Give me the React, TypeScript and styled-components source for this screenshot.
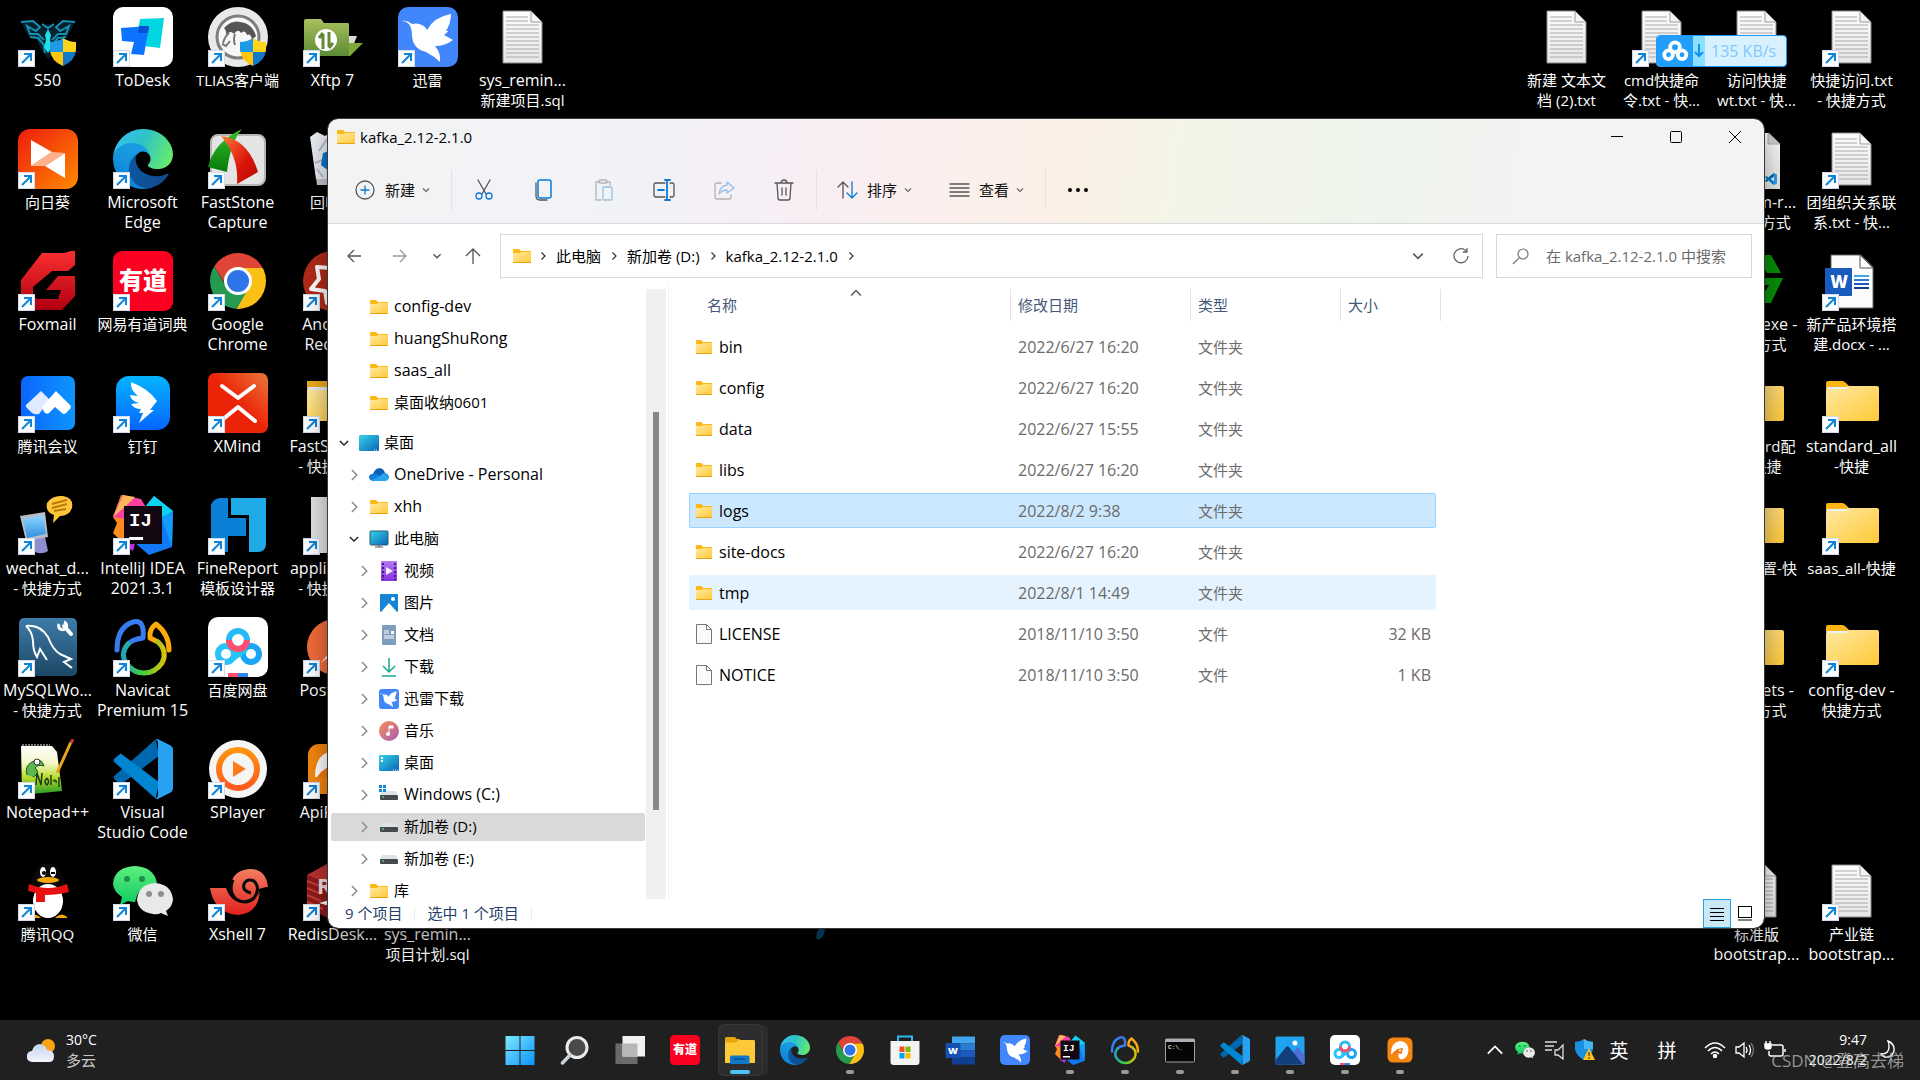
import React from 'react';
import styled, { createGlobalStyle, css } from 'styled-components';

const CJK = /[\u3000-\u9fff]/;
const FONT = '"Open Sans", "Noto Sans CJK SC", "Noto Sans", sans-serif';

const GlobalStyle = createGlobalStyle`
  *, *::before, *::after { box-sizing: border-box; }
  body { margin: 0; background: #000; font-family: ${FONT}; overflow: hidden; }
  button, input { font: inherit; color: inherit; border: 0; padding: 0; margin: 0; background: none; }
  button { cursor: default; }
  svg { display: block; flex: none; }
`;

/* ---------- artwork ---------- */

const DefsSvg = styled.svg`
  position: absolute;
`;

const Defs = () => (
  <DefsSvg width="0" height="0" aria-hidden="true">
    <defs>
      <linearGradient id="folder" x1="0" y1="0" x2="1" y2="1"><stop offset="0" stopColor="#ffe9a2" /><stop offset="1" stopColor="#ffc937" /></linearGradient>
      <linearGradient id="page" x1="0" y1="0" x2="0" y2="1"><stop offset="0" stopColor="#fdfdfd" /><stop offset="1" stopColor="#e6e6e6" /></linearGradient>
      <linearGradient id="edgeA" x1="0" y1=".3" x2="1" y2=".5"><stop offset="0" stopColor="#0c59a4" /><stop offset="1" stopColor="#114a8b" /></linearGradient>
      <linearGradient id="edgeB" x1=".8" y1=".1" x2=".3" y2="1"><stop offset="0" stopColor="#1b9de2" /><stop offset=".5" stopColor="#1595df" /><stop offset="1" stopColor="#0680d7" /></linearGradient>
      <linearGradient id="edgeC" x1="0" y1=".3" x2="1" y2=".6"><stop offset="0" stopColor="#35c1f1" /><stop offset=".45" stopColor="#2cc3c9" /><stop offset="1" stopColor="#66eb6e" /></linearGradient>
      <linearGradient id="sun" x1="0" y1="0" x2="1" y2="1"><stop offset="0" stopColor="#ee1c0c" /><stop offset="1" stopColor="#ff8a00" /></linearGradient>
      <linearGradient id="red" x1="0" y1="0" x2="0" y2="1"><stop offset="0" stopColor="#fb2f30" /><stop offset="1" stopColor="#b00010" /></linearGradient>
      <linearGradient id="meet" x1="0" y1="0" x2="1" y2="0"><stop offset="0" stopColor="#0a66ff" /><stop offset="1" stopColor="#0d95ff" /></linearGradient>
      <linearGradient id="ding" x1="0" y1="0" x2="0" y2="1"><stop offset="0" stopColor="#05b4ff" /><stop offset="1" stopColor="#0664ff" /></linearGradient>
      <linearGradient id="xmind" x1="0" y1="1" x2="1" y2="0"><stop offset=".5" stopColor="#ec2407" /><stop offset="1" stopColor="#e9783a" /></linearGradient>
      <linearGradient id="mysql" x1="0" y1="0" x2="0" y2="1"><stop offset="0" stopColor="#3d7ba8" /><stop offset="1" stopColor="#1c4866" /></linearGradient>
      <linearGradient id="navi" x1="0" y1="0" x2="1" y2="0"><stop offset="0" stopColor="#1fa6b8" /><stop offset=".45" stopColor="#3fcf3f" /><stop offset="1" stopColor="#d8c20a" /></linearGradient>
      <linearGradient id="wx" x1="0" y1="0" x2="0" y2="1"><stop offset="0" stopColor="#5cf07c" /><stop offset="1" stopColor="#10c964" /></linearGradient>
      <linearGradient id="shell" x1="0" y1="0" x2="0" y2="1"><stop offset="0" stopColor="#f37e62" /><stop offset="1" stopColor="#e21f1c" /></linearGradient>
      <linearGradient id="orange" x1="0" y1="0" x2="0" y2="1"><stop offset="0" stopColor="#ff930f" /><stop offset="1" stopColor="#ff5a1c" /></linearGradient>
      <linearGradient id="npp" x1="0" y1="0" x2="0" y2="1"><stop offset="0" stopColor="#fff" /><stop offset=".35" stopColor="#f4f8c8" /><stop offset=".65" stopColor="#b6dc28" /><stop offset="1" stopColor="#1d962a" /></linearGradient>
      <linearGradient id="xftp" x1="0" y1="0" x2="0" y2="1"><stop offset="0" stopColor="#a8c05c" /><stop offset="1" stopColor="#5c8a36" /></linearGradient>
      <linearGradient id="green" x1="0" y1="0" x2="0" y2="1"><stop offset="0" stopColor="#33c02a" /><stop offset="1" stopColor="#067a08" /></linearGradient>
      <linearGradient id="redOrange" x1="0" y1="0" x2="1" y2="1"><stop offset="0" stopColor="#ff7a3c" /><stop offset=".6" stopColor="#d8140a" /><stop offset="1" stopColor="#b80a04" /></linearGradient>
      <linearGradient id="desk" x1="0" y1="0" x2="1" y2="1"><stop offset="0" stopColor="#35d5e6" /><stop offset="1" stopColor="#0a62b8" /></linearGradient>
      <linearGradient id="win" x1="0" y1="0" x2="1" y2="1"><stop offset="0" stopColor="#7ce9ff" /><stop offset="1" stopColor="#0c92fb" /></linearGradient>
      <linearGradient id="purple" x1="0" y1="0" x2="0" y2="1"><stop offset="0" stopColor="#b678f5" /><stop offset="1" stopColor="#8433dd" /></linearGradient>
      <linearGradient id="music" x1="0" y1="0" x2="1" y2="1"><stop offset="0" stopColor="#fb8f52" /><stop offset="1" stopColor="#a45cb8" /></linearGradient>
      <linearGradient id="cloud" x1="0" y1="0" x2="0" y2="1"><stop offset="0" stopColor="#c3d3ee" /><stop offset="1" stopColor="#f2f6fd" /></linearGradient>
      <linearGradient id="glass" x1="0" y1="0" x2="0" y2="1"><stop offset="0" stopColor="#8fd8ff" /><stop offset="1" stopColor="#2f8fe0" /></linearGradient>
      <clipPath id="disc"><circle cx="30" cy="30" r="28" /></clipPath>
      <clipPath id="shieldClip"><path d="M45 31 Q51 35 58 35 V43 Q57 54 45 59 Q33 54 32 43 V35 Q39 35 45 31Z" /></clipPath>
    </defs>
  </DefsSvg>
);

const Shield = () => (
  <g clipPath="url(#shieldClip)">
    <rect x="32" y="31" width="13" height="14" fill="#1e9be6" /><rect x="45" y="31" width="13" height="14" fill="#ffd21c" />
    <rect x="32" y="45" width="13" height="14" fill="#ffc60d" /><rect x="45" y="45" width="13" height="14" fill="#1379c9" />
  </g>
);

const Bird = () => (
  <path fill="#fff" d="M4 14 Q9 13 14 17 Q21 15 27 20 L29 23 Q36 10 53 7 Q53 16 48 24 Q53 23 46 28 L55 33 Q47 39 37 39 Q43 46 42 55 Q36 49 28 45 Q15 42 14 29 Q14 21 11 17 Q8 14 4 14Z" />
);

const Clover = ({ mono }: { mono?: boolean }) => (
  <g fill="none" strokeWidth={mono ? 7 : 6} strokeLinecap="round">
    <circle cx="18" cy="37" r="8" stroke={mono ? '#fff' : '#28c3f7'} />
    <circle cx="43" cy="37" r="8" stroke={mono ? '#fff' : '#1ba6f5'} />
    {!mono && <path d="M25 41 L36 33" stroke="#28c3f7" />}
    <circle cx="30" cy="23" r="9" stroke={mono ? '#fff' : '#28b9f7'} />
    {!mono && <path d="M21 23 A9 9 0 0 0 39 23" stroke="#ff4d6d" strokeLinecap="butt" />}
  </g>
);

const Page = () => (
  <g>
    <path d="M10 4 H38 L49 15 V56 H10Z" fill="url(#page)" stroke="#8b8b8b" />
    <path d="M38 4 V15 H49Z" fill="#f5f5f5" stroke="#9a9a9a" />
    <path d="M13 10 H35 M13 14 H35 M13 18 H46 M13 22 H46 M13 26 H46 M13 30 H46 M13 34 H46 M13 38 H46 M13 42 H46 M13 46 H46 M13 50 H46" stroke="#a9a9a9" />
  </g>
);

const BigFolder = () => (
  <g>
    <path d="M4 10 Q4 8 6 8 H20 Q22 8 24 10 L28 14 H54 V30 H4Z" fill="#fbb614" />
    <path d="M5 14 H24 L28 13 V18 H5Z" fill="#e8f0fb" />
    <path d="M4 18 Q4 16 6 16 H24 L28 13 H55 Q57 13 57 15 V46 Q57 48 55 48 H6 Q4 48 4 46Z" fill="url(#folder)" />
  </g>
);

const Code = () => (
  <g transform="scale(.6)">
    <path d="M71 1 L77 28 L13 76 L3 68 Q-1 64 3 61 Z" fill="#0068b0" />
    <path d="M71 99 L77 72 L13 24 L3 32 Q-1 36 3 39 Z" fill="#0086d1" />
    <path d="M71 1 Q73 -1 76 1 L96 11 Q100 13 100 18 V82 Q100 87 96 89 L76 99 Q73 101 71 99 Q75 98 75 93 V7 Q75 2 71 1Z" fill="#27a2f3" />
  </g>
);

const ART: Record<string, React.ReactNode> = {
  s50: (
    <g>
      <path d="M3 15 L16 13 L23 20 L30 17 L37 20 L44 13 L57 15 L49 30 L42 28 L36 46 L30 52 L24 44 L18 32 L11 30Z" fill="#06202c" />
      <path d="M3 15 L15 14 L22 20 L18 24 L9 19 L12 27 L20 27 L26 33 M57 15 L45 14 L38 20 L42 24 L51 19 L48 27 L40 27 L34 33 M12 30 L20 31 L26 38 L27 46 M48 30 L40 31 L34 38 L33 46 M24 17 L30 21 L36 17" fill="none" stroke="#168fb0" strokeWidth="2" />
      <path d="M30 22 L33 28 L32 33 L34 40 L30 46 L26 40 L28 33 L27 28Z" fill="#1fe0e6" />
      <Shield />
    </g>
  ),
  todesk: (
    <g>
      <rect width="60" height="60" rx="10" fill="#fff" />
      <path d="M27 12 L51 11 L47 41 L30 39 L33 25 L25 24Z" fill="#00d5e0" />
      <path d="M8 21 L36 19 L31 48 L18 47 L21 35 L9 34Z" fill="#0b73ff" />
      <path d="M26 19 L36 19 L35 26 L25 26Z" fill="#0752d4" />
    </g>
  ),
  tlias: (
    <g>
      <circle cx="30" cy="30" r="30" fill="#e9e9e9" /><circle cx="30" cy="30" r="21" fill="#f7f7f7" stroke="#7e7e7e" strokeWidth="3" />
      <path d="M16 21 Q24 13 32 15 Q44 16 48 29 L44 33 Q43 26 39 28 Q37 22 33 26 Q30 21 26 27 Q22 22 18 29 Q19 24 16 21Z" fill="#555" />
      <path d="M15 36 Q17 29 21 26 M27 38 Q25 32 27 27 M14 37 L18 39 L22 34" fill="none" stroke="#777" strokeWidth="2" />
      <Shield />
    </g>
  ),
  xftp: (
    <g>
      <path d="M42 29 H54 L47 47 H40Z" fill="#d9ddd2" /><path d="M46 36 H60 L47 49 H40Z" fill="#82a83a" />
      <path d="M1 14 Q1 12 3 12 H18 L21 16 H45 Q46 16 46 18 V49 H1Z" fill="url(#xftp)" />
      <circle cx="23" cy="33" r="11" fill="#fff" />
      <path d="M20 42 V27 M16 31 L20 26 M26 25 V40 M30 36 L26 41" fill="none" stroke="#5f8a38" strokeWidth="3" />
    </g>
  ),
  bird: <g><rect width="60" height="60" rx="10" fill="#4286fb" /><Bird /></g>,
  page: <Page />,
  sunflower: (
    <g>
      <rect width="60" height="60" rx="12" fill="url(#sun)" />
      <path d="M13 11 L34 23 L13 37Z M47 24 V49 L27 37Z" fill="#fff" /><path d="M13 37 L34 23 L47 24 L27 37Z" fill="#ffb08c" />
    </g>
  ),
  edge: (
    <g transform="scale(.2344)">
      <path fill="url(#edgeA)" d="M231 190.5c-3.4 1.8-6.9 3.4-10.5 4.7a101.600 101.600 0 0 1-35.900 6.500c-47.300 0-88.500-32.500-88.500-74.300 0-11.400 6.400-21.800 16.400-27.300-42.800 1.800-53.800 46.400-53.800 72.500 0 74 68.100 81.400 82.800 81.400 7.900 0 19.800-2.300 27-4.600l1.300-.4a128 128 0 0 0 66.600-52.800 4 4 0 0 0-5.400-5.700z" />
      <path fill="url(#edgeB)" d="M105.700 241.400a79.200 79.200 0 0 1-22.700-21.300 80.700 80.700 0 0 1 29.500-120c3.100-1.500 8.500-4.100 15.600-4a32.400 32.400 0 0 1 25.700 13 32 32 0 0 1 6.300 18.700c0-.2 24.500-79.600-80-79.600-44 0-80 41.700-80 78.200a130.200 130.200 0 0 0 12.100 56 128 128 0 0 0 156.400 67 75.500 75.500 0 0 1-62.800-8z" />
      <path fill="url(#edgeC)" d="M152.300 148.900c-.9 1-3.400 2.500-3.400 5.600 0 2.600 1.700 5.200 4.800 7.300 14.400 10 41.400 8.700 41.500 8.700 10.600 0 21-2.900 30.100-8.300a61.200 61.200 0 0 0 30.500-52.900c.3-22.400-8-37.300-11.300-43.900C223.500 24.300 177.700 0 128 0A128 128 0 0 0 0 126.200c.5-36.500 36.800-66 80-66 3.500 0 23.500.3 42 10 16.300 8.600 24.900 19 30.800 29.200 6.200 10.700 7.300 24.100 7.300 29.500s-2.700 13.300-7.800 20z" />
    </g>
  ),
  faststone: (
    <g>
      <rect x="3" y="6" width="54" height="50" rx="7" fill="#e4e4e4" stroke="#b5b5b5" strokeWidth="2" />
      <path d="M34 0 Q22 14 19 43 L0 38 Q6 13 34 0Z" fill="url(#green)" /><path d="M13 7 Q40 10 50 43 L29 55 Q31 28 13 7Z" fill="url(#redOrange)" />
    </g>
  ),
  bin: (
    <g>
      <path d="M8 8 L52 8 L46 56 H14Z" fill="#c3c8cd" /><path d="M7 8 L14 3 L22 7 L30 2 L40 6 L50 4 L53 12 L47 50 H13Z" fill="#e9edf1" />
      <path d="M16 22 L24 10 M12 34 L22 30 M20 48 L14 40" stroke="#b4bcc4" strokeWidth="2" />
      <path d="M20 24 L26 22 L28 30 L34 32 L26 42 L18 36Z" fill="#0b74d1" />
    </g>
  ),
  foxmail: (
    <path fill="url(#red)" d="M24 2 H46 L53 0 H57 V14 L50 20 H34 L15 36 V46 L20 48 H40 L43 39 H28 L40 25 H57 V45 L44 59 H14 L3 49 V29Z" />
  ),
  youdao: (
    <g><rect width="60" height="60" rx="9" fill="#fb0021" />
      <text x="30" y="38" fontSize="24" fontWeight="900" textAnchor="middle" fill="#fff" fontFamily='"Noto Sans CJK SC", sans-serif'>有道</text></g>
  ),
  chrome: (
    <g clipPath="url(#disc)">
      <path d="M19 36 L6 15 L0 0 H60 V17 H30Z" fill="#df4436" /><path d="M30 17 H60 V60 H27 L41 36Z" fill="#fbc013" />
      <path d="M41 36 L27 61 H0 V4 L6 15 L19 37 L30 43Z" fill="#259a50" />
      <circle cx="30" cy="30" r="14" fill="#fff" /><circle cx="30" cy="30" r="11" fill="#2f74e8" />
    </g>
  ),
  another: (
    <g><circle cx="30" cy="30" r="30" fill="#b22a17" />
      <path d="M14 16 L27 17 L34 10 L38 22 L48 30 L36 34 L30 44 L24 52 L22 40 L8 38 L16 28Z" fill="none" stroke="#fff" strokeWidth="4" strokeLinejoin="round" /></g>
  ),
  meeting: (
    <g><rect x="3" y="3" width="54" height="54" rx="7" fill="url(#meet)" />
      <path d="M8 32 L23 18 L32 27 L21 41 Q17 42 14 40 L9 35 Q7 33 8 32Z" fill="#dfeaff" />
      <path d="M24 34 L38 18 L52 32 Q54 34 51 37 L48 40 Q46 42 44 40 L37 34 L31 40 Q29 42 26 39Z" fill="#fff" /></g>
  ),
  ding: (
    <g><rect x="3" y="3" width="54" height="54" rx="13" fill="url(#ding)" />
      <path d="M18 9 Q36 16 44 28 L37 37 H41 L26 50 L30 40 H26 L28 36 Q21 36 18 31 L26 30 Q18 28 17 22 L25 23 Q17 17 18 9Z" fill="#fff" /></g>
  ),
  xmind: (
    <g><rect width="60" height="60" rx="7" fill="url(#xmind)" />
      <path d="M14 13 L30 25 L46 13 M14 47 L30 34 L47 48" stroke="#fff" strokeWidth="4" fill="none" strokeLinecap="round" strokeLinejoin="round" /></g>
  ),
  folder: <BigFolder />,
  oldfolder: <g><path d="M4 8 H24 L28 12 V48 H4Z" fill="#edab1c" /><path d="M5 14 H52 V30 H5Z" fill="#e5ebf5" /><path d="M4 17 H56 V48 H4Z" fill="url(#folder)" /></g>,
  wechatdev: (
    <g>
      <path d="M17 44 L27 42 L30 56 Q24 60 17 57Z" fill="#8d8fd0" /><path d="M2 21 L27 17 L30 42 L8 46Z" fill="#b9bcc6" /><path d="M5 24 L25 20 L28 39 L9 43Z" fill="url(#glass)" />
      <path d="M29 8 Q34 0 45 1 Q56 3 54 13 Q51 21 42 21 L35 28 L36 20 Q27 17 29 8Z" fill="#ffc63c" /><path d="M34 9 L49 5 M34 13 L49 9 M36 16 L48 14" stroke="#b87b0a" strokeWidth="2" />
    </g>
  ),
  idea: (
    <g>
      <path d="M8 0 L28 5 L30 30 L12 50 L0 38 L4 28 L0 22Z" fill="#ff8a1f" /><path d="M9 0 L28 4 L34 14 L12 24 L0 22Z" fill="#fb3fa0" /><path d="M10 0 L22 2 L12 12 L0 22Z" fill="#ffb65c" />
      <path d="M41 1 L60 16 L59 52 L36 60 L22 48 L32 12Z" fill="#1278f3" /><path d="M41 1 L60 16 L48 24 L32 12Z" fill="#0dd3ef" /><path d="M48 22 L60 17 L59 52Z" fill="#129bf7" />
      <path d="M22 48 L10 50 L20 56Z" fill="#c12ee0" /><rect x="11" y="11" width="38" height="38" fill="#130711" />
      <text x="16" y="31" fontSize="19" fontWeight="700" fill="#fff" fontFamily='"Liberation Mono", monospace'>IJ</text><rect x="16" y="42" width="14" height="3" fill="#fff" />
    </g>
  ),
  fine: (
    <g><path d="M3 10 Q5 4 12 3 H20 V23 H38 V41 H20 V57 H3Z" fill="#0a80d6" /><path d="M23 3 H58 V50 Q57 57 50 57 H41 V20 H23Z" fill="#1eaae6" /></g>
  ),
  blank: <path d="M8 2 H52 V58 H8Z" fill="#e2e2e2" />,
  mysql: (
    <g><rect x="1" y="1" width="58" height="58" rx="5" fill="url(#mysql)" />
      <path d="M8 9 Q22 7 30 20 Q35 33 42 37 L53 42 L46 45 L54 51 M8 9 Q14 14 15 24 Q15 34 19 40 L22 32 L29 43" fill="none" stroke="#fff" strokeWidth="2" />
      <path d="M46 9 L53 17" stroke="#fff" strokeWidth="4" strokeLinecap="round" /><path d="M41 7 A4 4 0 1 0 46 5" fill="none" stroke="#fff" strokeWidth="3" /></g>
  ),
  navicat: (
    <g fill="none" strokeWidth="5" strokeLinecap="round" strokeLinejoin="round">
      <path d="M4 33 Q4 10 20 5 Q32 2 30 21 Q20 22 15 27" stroke="#3b7bf2" /><path d="M56 33 Q56 17 43 7 Q36 12 37 21 L45 25" stroke="#fca90a" />
      <path d="M15 27 Q7 36 13 46 Q20 56 31 56 Q42 56 49 46 Q55 34 45 25" stroke="url(#navi)" />
    </g>
  ),
  baidu: <g><rect width="60" height="60" rx="10" fill="#fff" /><Clover /><rect x="20" y="56" width="10" height="4" fill="#ff4d6d" /><rect x="30" y="56" width="10" height="4" fill="#2a86f6" /></g>,
  postman: <g><circle cx="32" cy="30" r="28" fill="#f26b3a" /><path d="M18 46 L34 26 L42 30 L28 38Z" fill="#fff" /></g>,
  npp: (
    <g><path d="M3 7 H34 L39 13 L44 52 L4 56Z" fill="url(#npp)" /><path d="M4 6 H32" stroke="#777" strokeWidth="2" strokeDasharray="2 1" />
      <path d="M9 36 Q6 26 16 22 Q24 19 26 27 Q20 25 17 29 Q23 34 15 38" fill="#59b94c" stroke="#234f1d" /><circle cx="19" cy="23" r="3" fill="#fff" stroke="#333" />
      <path d="M18 46 L19 34 L23 46 L24 34 M29 39 Q25 43 29 46 Q32 43 29 39 M33 36 V46 M35 42 Q39 40 38 44 M41 48 V38" fill="none" stroke="#1b3c16" strokeWidth="1.500" />
      <path d="M39 34 L53 3" stroke="#e8a51c" strokeWidth="3" /><path d="M53 4 L55 0" stroke="#c13b34" strokeWidth="3" /></g>
  ),
  vscode: <Code />,
  splayer: (
    <g><circle cx="30" cy="30" r="29" fill="#f5f5f5" /><circle cx="30" cy="30" r="19" fill="none" stroke="url(#orange)" strokeWidth="6" /><path d="M25 22 L38 30 L25 38Z" fill="#ff7a18" /></g>
  ),
  apipost: (
    <g><rect x="5" y="5" width="50" height="50" rx="11" fill="#f5860f" /><path d="M30 12 Q46 13 47 30 Q46 47 32 49 Q24 44 28 38 L12 38 Q12 14 30 12Z" fill="#fff" /><path d="M14 38 Q22 26 36 26 L33 38 Q24 36 22 39Z" fill="#f2780c" /><circle cx="30" cy="31" r="2" fill="#fff" /></g>
  ),
  qq: (
    <g><ellipse cx="30" cy="24" rx="16" ry="22" fill="#0a0a0a" /><ellipse cx="30" cy="40" rx="15" ry="17" fill="#fff" />
      <ellipse cx="25" cy="11" rx="3" ry="5" fill="#fff" /><ellipse cx="35" cy="11" rx="3" ry="5" fill="#fff" /><circle cx="26" cy="12" r="2" /><path d="M33 12 H37" stroke="#000" strokeWidth="2" />
      <ellipse cx="30" cy="19" rx="11" ry="3" fill="#f6a70a" /><path d="M11 23 Q30 31 49 23 L51 31 Q40 34 27 34 V41 H18 V32 L10 30Z" fill="#e71111" />
      <path d="M38 56 Q44 51 49 56 V57 H37Z M22 56 Q16 51 11 56 V57 H23Z" fill="#f6a70a" /></g>
  ),
  wechat: (
    <g><path d="M22 5 Q41 6 44 22 Q26 24 23 38 L22 41 Q18 41 15 40 L7 44 L9 36 Q0 30 0 22 Q2 6 22 5Z" fill="url(#wx)" /><circle cx="14" cy="18" r="3" fill="#1f8f47" /><circle cx="29" cy="18" r="3" fill="#1f8f47" />
      <path d="M42 22 Q58 23 60 38 Q60 45 53 50 L55 55 L48 52 Q44 54 40 53 Q25 51 24 38 Q26 23 42 22Z" fill="#e9e9e9" /><circle cx="36" cy="33" r="3" fill="#8f8f8f" /><circle cx="48" cy="33" r="3" fill="#8f8f8f" /></g>
  ),
  xshell: (
    <g><path d="M2 27 H18 Q24 44 40 42 Q52 38 51 28 L58 26 H60 Q58 8 42 8 Q25 9 23 24 Q25 40 37 41 Q50 40 52 30 Q50 53 30 54 Q6 52 2 27Z" fill="url(#shell)" />
      <path d="M43 32 Q34 30 36 23 Q39 17 46 20 Q53 27 46 37 Q38 44 28 38 Q20 30 25 19" fill="none" stroke="#0a0a0a" strokeWidth="3" /></g>
  ),
  redis: (
    <g><path d="M4 14 L26 2 L56 14 V46 L30 60 L4 46Z" fill="#8e1a1a" /><path d="M4 14 L26 2 L56 14 L30 24Z" fill="#bb3030" />
      <path d="M4 20 L20 26 M4 27 L18 33 M4 34 L18 40 M4 41 L20 48" stroke="#c63a35" strokeWidth="2" /><text x="14" y="33" fontSize="22" fontWeight="700" fill="#f2dcdc">R</text><path d="M16 42 L30 38 V46Z" fill="#fff" /></g>
  ),
  vsfile: <g><path d="M6 4 H42 L53 15 V60 H6Z" fill="url(#page)" /><path d="M41 4 V15 H53Z" fill="#cfcfcf" stroke="#aaa" /><g transform="translate(38 44) scale(.2)"><Code /></g></g>,
  recycle: <path d="M14 4 H44 L54 22 H40 L33 12 L22 30 L8 24Z M56 27 L44 52 H30 V44 H36 L42 34 H36 V27Z" fill="#088f08" />,
  word: (
    <g><path d="M9 4 H39 L51 16 V57 H9Z" fill="#fcfcfc" stroke="#666" /><path d="M38 4 V17 H51Z" fill="#fff" stroke="#555" />
      <rect x="3" y="17" width="27" height="28" rx="1" fill="#185abd" /><text x="17" y="37" fontSize="17" fontWeight="800" textAnchor="middle" fill="#fff">W</text>
      <path d="M32 25 H47" stroke="#41a5ee" strokeWidth="2" /><path d="M32 29 H47" stroke="#2b7cd3" strokeWidth="2" /><path d="M32 33 H47" stroke="#185abd" strokeWidth="2" /><path d="M32 37 H47" stroke="#103f91" strokeWidth="2" /></g>
  ),
  start: <g fill="url(#win)"><path d="M1 2 H29 V30 H1Z M31 2 H59 V30 H31Z M1 32 H29 V60 H1Z M31 32 H59 V60 H31Z" /></g>,
  search: <g fill="none" strokeLinecap="round"><circle cx="34" cy="25" r="20" stroke="#e8ecee" strokeWidth="6" fill="#4a4a4a" /><path d="M20 40 L5 56" stroke="#c9d2d6" strokeWidth="7" /></g>,
  taskview: <g><rect x="1" y="17" width="44" height="41" fill="#6a6a6a" /><rect x="15" y="2" width="45" height="41" fill="#f1f1f1" /><rect x="15" y="17" width="30" height="26" fill="#b7b7b7" /></g>,
  explorer: (
    <g><path d="M0 7 Q0 4 3 4 H20 L25 10 H0Z M0 8 H30 V30 H0Z" fill="#e5a50d" /><path d="M0 15 H22 L27 10 H58 Q60 10 60 13 V56 H0Z" fill="#fdc93a" />
      <path d="M10 44 Q10 41 14 41 H45 Q49 41 49 44 V58 H10Z" fill="#1179c8" /><path d="M18 48 H40" stroke="#0a4f8e" strokeWidth="3" /></g>
  ),
  store: (
    <g><path d="M16 14 V3 H44 V14" fill="none" stroke="#2bb8f0" strokeWidth="4" /><path d="M1 12 H59 V54 Q59 60 53 60 H7 Q1 60 1 54Z" fill="#f3f3f3" />
      <rect x="19" y="23" width="10" height="11" fill="#f25022" /><rect x="31" y="23" width="10" height="11" fill="#7fba00" /><rect x="19" y="36" width="10" height="11" fill="#00a4ef" /><rect x="31" y="36" width="10" height="11" fill="#ffb900" /></g>
  ),
  wordapp: (
    <g><path d="M14 3 H60 V17 H14Z" fill="#41a5ee" /><path d="M14 17 H60 V31 H14Z" fill="#2b7cd3" /><path d="M14 31 H60 V45 H14Z" fill="#185abd" /><path d="M14 45 H60 V59 H14Z" fill="#103f91" />
      <rect x="1" y="16" width="30" height="30" rx="2" fill="#1650ae" /><text x="16" y="38" fontSize="19" fontWeight="800" textAnchor="middle" fill="#fff">W</text></g>
  ),
  cmd: <g><rect x="1" y="8" width="58" height="46" rx="2" fill="#050505" stroke="#9aa0a6" strokeWidth="2" /><rect x="1" y="8" width="58" height="6" fill="#a9afb5" /><text x="6" y="28" fontSize="12" fontWeight="700" fill="#ddd" fontFamily='"Liberation Mono", monospace'>C:\_</text></g>,
  photos: <g><rect x="1" y="3" width="58" height="56" rx="3" fill="#20a4f0" /><path d="M32 40 L46 24 L59 40 V59 H32Z" fill="#4f6fd6" /><path d="M1 50 L22 24 Q25 21 28 24 L56 59 H1Z" fill="#143f7d" /><circle cx="40" cy="16" r="5" fill="#fff" /></g>,
};

const Art = ({ name, size }: { name: string; size: number }) => (
  <svg width={size} height={size} viewBox="0 0 60 60" aria-hidden="true">{ART[name]}</svg>
);

const Chevron = ({ dir = 'down', size = 10, color = '#666' }: { dir?: 'down' | 'right' | 'up'; size?: number; color?: string }) => (
  <svg width={size} height={size} viewBox="0 0 10 10" fill="none" stroke={color} strokeWidth={size > 12 ? 1 : 1.2} aria-hidden="true">
    <path d={dir === 'down' ? 'M2 3.500 L5 6.500 L8 3.500' : dir === 'up' ? 'M1 7 L5 3 L9 7' : 'M3.500 1.500 L7 5 L3.500 8.500'} />
  </svg>
);

const SmallFolder = ({ width = 20 }: { width?: number }) => (
  <svg width={width} height="20" viewBox="0 0 20 20" preserveAspectRatio="none" aria-hidden="true">
    <path d="M1 4 Q1 3 2 3 H7 L9 5 H19 V9 H1Z" fill="#fbb816" /><path d="M1 7 H8 L9 6 H19 V17 H1Z" fill="url(#folder)" /><path d="M1 16 H19 V17 H1Z" fill="#eaa317" />
  </svg>
);

const Drive = ({ win }: { win?: boolean }) => (
  <g><path d="M3 6 H17 L19 10 H1Z" fill="#dfe1e6" /><rect x="1" y="10" width="18" height="5" rx="1" fill="#45484c" /><circle cx="4" cy="12" r="1" fill="#3fe052" />
    {win && <path d="M0 0 H3 V3 H0Z M4 0 H7 V3 H4Z M0 4 H3 V7 H0Z M4 4 H7 V7 H4Z" fill="#1587d8" />}</g>
);

const TREE_ART: Record<string, React.ReactNode> = {
  desktop: <g><rect y="2" width="20" height="16" rx="1" fill="url(#desk)" /><path d="M15 17 H19" stroke="#fff" strokeDasharray="1 1" /></g>,
  desktop2: <g><rect y="2" width="20" height="16" rx="1" fill="url(#desk)" /><path d="M2 4 H4 V6 H2Z M2 7 H4 V9 H2Z" fill="#fff" /><path d="M14 17 H19" stroke="#fff" strokeDasharray="1 1" /></g>,
  onedrive: <g><path d="M4 9 Q6 3 11 3 Q15 4 16 8 Q20 9 20 13 L10 14 L0 13 Q0 9 4 9Z" fill="#0a5fb8" /><path d="M4 9 Q8 8 11 11 L5 16 H4 Q0 15 0 12 Q1 9 4 9Z" fill="#1080d8" /><path d="M3 15 L11 11 Q14 7 17 9 Q20 10 20 13 Q19 16 16 16 H5Z" fill="#28a4ee" /></g>,
  pc: <g><rect x="1" y="2" width="18" height="14" rx="1" fill="url(#desk)" stroke="#2c5a70" strokeWidth="1" /><path d="M10 16 V18 M6 18 H14" stroke="#555" strokeWidth="1" /></g>,
  video: <g><rect x="2" width="16" height="20" rx="1" fill="url(#purple)" /><path d="M4 2 V19 M16 2 V19" stroke="#4b1a86" strokeWidth="2" strokeDasharray="2 2" /><path d="M7 6 L14 10 L7 14Z" fill="#f5eefc" /></g>,
  picture: <g><rect x="1" y="1" width="18" height="18" rx="1" fill="#1584d6" /><path d="M2 19 L10 10 L18 19Z" fill="#fff" /><circle cx="14" cy="6" r="2" fill="#fff" /></g>,
  doc: <g><rect x="3" width="14" height="20" rx="1" fill="#7f9dbd" /><path d="M5 6 H10 M5 8 H10 M5 11 H15 M5 13 H15" stroke="#fff" /><rect x="12" y="6" width="3" height="3" fill="#fff" /></g>,
  download: <g fill="none" stroke="#17a98c" strokeWidth="1.500"><path d="M10 1 V15 M4 9 L10 15 L16 9 M3 19 H17" /></g>,
  thunder: <g><rect width="20" height="20" rx="3" fill="#4286fb" /><g transform="scale(.333)"><Bird /></g></g>,
  music: <g><circle cx="10" cy="10" r="10" fill="url(#music)" /><path d="M10 5 V13 M10 5 H14 V7 H10" stroke="#fff" fill="#fff" /><circle cx="9" cy="13" r="2" fill="#fff" /></g>,
  driveC: <Drive win />,
  drive: <Drive />,
};

const TreeIcon = ({ name }: { name: string }) =>
  name === 'folder' || name === 'library'
    ? <SmallFolder />
    : <svg width="20" height="20" viewBox="0 0 20 20" aria-hidden="true">{TREE_ART[name]}</svg>;

const LineIcon = ({ children, faded }: { children: React.ReactNode; faded?: boolean }) => (
  <svg width="22" height="22" viewBox="0 0 22 22" fill="none" stroke="#555" strokeWidth="1.300" strokeLinecap="round" strokeLinejoin="round" opacity={faded ? 0.4 : 1} aria-hidden="true">{children}</svg>
);
const BLUE = '#0a7ad6';

/* ---------- desktop ---------- */

const Screen = styled.div`
  position: relative;
  display: flex;
  flex-direction: column;
  height: 100vh;
  background: #000;
`;

const Desktop = styled.main`
  position: relative;
  flex: 1;
  display: flex;
  justify-content: space-between;
  padding: 0 21px 0 0;
  min-height: 0;
`;

const IconGrid = styled.div<{ $columns: number }>`
  display: grid;
  grid-template-columns: repeat(${p => p.$columns}, 95px);
  grid-template-rows: repeat(8, 122px);
  grid-auto-flow: column;
`;

const Tile = styled.button`
  display: flex;
  flex-direction: column;
  align-items: center;
  gap: 3px;
  padding-top: 7px;
  color: #fff;
`;

const TileArt = styled.span`
  position: relative;
  display: block;
`;

const Arrow = styled.svg`
  position: absolute;
  left: 0;
  bottom: 0;
`;

const TileLine = styled.span<{ $cjk: boolean }>`
  display: block;
  font-size: ${p => (p.$cjk ? 15 : 16)}px;
  line-height: 20px;
  height: 20px;
  white-space: nowrap;
  text-align: center;
`;

type Shortcut = { art: string; label: string[]; link?: boolean } | null;
const s = (art: string, ...label: string[]): Shortcut => ({ art, label, link: true });
const f = (art: string, ...label: string[]): Shortcut => ({ art, label });

const LEFT: Shortcut[] = [
  s('s50', 'S50'), s('sunflower', '向日葵'), s('foxmail', 'Foxmail'), s('meeting', '腾讯会议'),
  s('wechatdev', 'wechat_d...', '- 快捷方式'), s('mysql', 'MySQLWo...', '- 快捷方式'), s('npp', 'Notepad++'), s('qq', '腾讯QQ'),
  s('todesk', 'ToDesk'), s('edge', 'Microsoft', 'Edge'), s('youdao', '网易有道词典'), s('ding', '钉钉'),
  s('idea', 'IntelliJ IDEA', '2021.3.1'), s('navicat', 'Navicat', 'Premium 15'), s('vscode', 'Visual', 'Studio Code'), s('wechat', '微信'),
  s('tlias', 'TLIAS客户端'), s('faststone', 'FastStone', 'Capture'), s('chrome', 'Google', 'Chrome'), s('xmind', 'XMind'),
  s('fine', 'FineReport', '模板设计器'), s('baidu', '百度网盘'), s('splayer', 'SPlayer'), s('xshell', 'Xshell 7'),
  s('xftp', 'Xftp 7'), f('bin', '回收站'), s('another', 'Another', 'Redis D'), s('oldfolder', 'FastStone...', '- 快捷方式'),
  s('blank', 'applicatio...', '- 快捷方式'), s('postman', 'Postman'), s('apipost', 'ApiPost7'), s('redis', 'RedisDesk...'),
  s('bird', '迅雷'), null, null, null, null, null, null, f('page', 'sys_remin...', '项目计划.sql'),
  f('page', 'sys_remin...', '新建项目.sql'), null, null, null, null, null, null, null,
];

const RIGHT: Shortcut[] = [
  f('page', '新建 文本文', '档 (2).txt'), null, null, null, null, null, null, null,
  s('page', 'cmd快捷命', '令.txt - 快...'), null, null, null, null, null, null, null,
  s('page', '访问快捷', 'wt.txt - 快...'), s('vsfile', 'custom-r...', '- 快捷方式'), s('recycle', 'setup.exe -', '快捷方式'), s('folder', 'standard配', '置-快捷'),
  s('folder', 'saas配置-快', '捷'), s('folder', 'templets -', '快捷方式'), null, s('page', '标准版', 'bootstrap...'),
  s('page', '快捷访问.txt', '- 快捷方式'), s('page', '团组织关系联', '系.txt - 快...'), s('word', '新产品环境搭', '建.docx - ...'), s('folder', 'standard_all', '-快捷'),
  s('folder', 'saas_all-快捷'), s('folder', 'config-dev -', '快捷方式'), null, s('page', '产业链', 'bootstrap...'),
];

const DesktopIcons = ({ items, columns }: { items: Shortcut[]; columns: number }) => (
  <IconGrid $columns={columns}>
    {items.map((it, i) => it ? (
      <Tile key={i} type="button">
        <TileArt>
          <Art name={it.art} size={60} />
          {it.link && (
            <Arrow width="17" height="17" viewBox="0 0 17 17" aria-hidden="true">
              <rect width="17" height="17" fill="#d3dbea" /><rect x="1" y="1" width="15" height="15" fill="#fcfdff" />
              <path d="M4 13 L12 5 M6 4 H13 V11" fill="none" stroke="#0f84d8" strokeWidth="2" />
            </Arrow>
          )}
        </TileArt>
        <span>{it.label.map(t => <TileLine key={t} $cjk={CJK.test(t)}>{t}</TileLine>)}</span>
      </Tile>
    ) : <span key={i} />)}
  </IconGrid>
);

const WallpaperFleck = styled.span`
  position: absolute;
  left: 817px;
  top: 926px;
  width: 7px;
  height: 14px;
  border-radius: 50%;
  background: #07456e;
  transform: rotate(25deg);
`;

const SpeedBadge = styled.div`
  position: absolute;
  top: 35px;
  right: 133px;
  z-index: 3;
  display: flex;
  align-items: stretch;
  width: 131px;
  height: 32px;
  border: 1px solid #2199fb;
  border-radius: 4px;
  overflow: hidden;
  background: #d8f1ff;
  color: #82c8fb;
  font-size: 16px;
  line-height: 30px;
`;
const BadgeLogo = styled.span`
  display: grid;
  place-items: center;
  width: 36px;
  background: #219efb;
`;
const BadgeArrow = styled.span`
  display: grid;
  place-items: center;
  width: 12px;
  margin-right: 6px;
  background: #8ce0ff;
`;

/* ---------- explorer window ---------- */

const Window = styled.section`
  position: absolute;
  inset: 119px 156px 92px 328px;
  z-index: 2;
  display: flex;
  flex-direction: column;
  overflow: hidden;
  border-radius: 10px;
  background: #fff;
  color: #000;
  font-size: 15px;
  outline: 1px solid #3a3a3a;
  box-shadow: 0 12px 28px rgba(0, 0, 0, 0.4);
`;

const Head = styled.header`
  border-bottom: 1px solid #d9dbde;
  background: linear-gradient(97deg, #f3f3f3 0%, #f1f3f7 19%, #f6eff5 31%, #fbeeef 40%, #fbf0e6 52%, #f3f5e8 60%, #eff4ec 72%, #f3f3f3 84%);
`;

const TitleBar = styled.div`
  display: flex;
  align-items: center;
  height: 36px;
  padding-left: 8px;
  gap: 4px;
`;
const Title = styled.h1`
  flex: 1;
  margin: 0;
  font-size: 15px;
  font-weight: 400;
  line-height: 20px;
`;
const CaptionButton = styled.button`
  display: grid;
  place-items: center;
  width: 59px;
  height: 36px;
`;
const Captions = styled.div`
  display: flex;
`;

const Commands = styled.div`
  display: flex;
  align-items: center;
  height: 68px;
  padding: 2px 0 0 17px;
`;
const TextCommand = styled.button`
  display: flex;
  align-items: center;
  height: 40px;
  padding: 0 10px;
  color: #111;
  & > span { margin: 0 6px 0 8px; line-height: 20px; }
`;
const CommandGroup = styled.div`
  display: flex;
  gap: 16px;
`;
const IconCommand = styled.button`
  display: grid;
  place-items: center;
  width: 44px;
  height: 40px;
`;
const Rule = styled.i`
  width: 1px;
  height: 40px;
  margin: 0 10px;
  background: #e1e2e5;
`;

const NavBar = styled.nav`
  display: flex;
  padding: 10px 12px 5px 3px;
`;
const NavButton = styled.button<{ $w: number }>`
  display: grid;
  place-items: center;
  width: ${p => p.$w}px;
  height: 44px;
`;
const box = css`
  display: flex;
  align-items: center;
  height: 44px;
  border: 1px solid #d9d9d9;
`;
const Address = styled.div`
  ${box}
  flex: 1;
  margin: 0 13px 0 5px;
  padding-left: 11px;
`;
const Crumbs = styled.div`
  display: flex;
  align-items: center;
  flex: 1;
  padding-left: 6px;
`;
const Crumb = styled.button`
  padding: 0 8px;
  line-height: 20px;
  white-space: nowrap;
`;
const SearchBox = styled.label`
  ${box}
  width: 256px;
  padding-left: 15px;
  gap: 16px;
`;
const SearchInput = styled.input`
  flex: 1;
  min-width: 0;
  height: 40px;
  outline: 0;
  &::placeholder { color: #6b6b6b; opacity: 1; }
`;

const Body = styled.div`
  flex: 1;
  display: flex;
  min-height: 0;
`;
const Side = styled.aside`
  display: flex;
  width: 338px;
  margin-top: 6px;
`;
const Tree = styled.ul`
  flex: 1;
  margin: 0;
  padding: 4px 1px 0 3px;
  list-style: none;
  overflow: hidden;
`;
const TreeItem = styled.li<{ $apart?: boolean }>`
  margin-bottom: ${p => (p.$apart ? 12 : 4)}px;
`;
const TreeRow = styled.button<{ $level: number; $on?: boolean; $cjk: boolean }>`
  display: flex;
  align-items: center;
  width: 100%;
  height: 28px;
  padding-left: ${p => 6 + 10 * p.$level}px;
  border-radius: 2px;
  background: ${p => (p.$on ? '#d9d9d9' : 'transparent')};
  font-size: ${p => (p.$cjk ? 15 : 16)}px;
  white-space: nowrap;
`;
const Twist = styled.span`
  width: 14px;
  height: 14px;
  margin-right: 8px;
`;
const TreeLabel = styled.span`
  margin-left: 5px;
  padding-bottom: 2px;
  line-height: 16px;
`;
const Track = styled.div`
  display: grid;
  grid-template-rows: 123fr 398fr 89fr;
  width: 20px;
  background: #f0f0f0;
`;
const Thumb = styled.div`
  grid-row: 2;
  justify-self: center;
  width: 6px;
  background: #868686;
`;

const Files = styled.div`
  flex: 1;
  margin-left: 2px;
  padding-left: 20px;
  border-left: 1px solid #f3f3f3;
`;
const Table = styled.table`
  width: 752px;
  table-layout: fixed;
  border-collapse: separate;
  border-spacing: 0 6px;
`;
const Th = styled.th<{ $line?: boolean; $pad?: number }>`
  position: relative;
  height: 34px;
  padding: 0 0 2px;
  vertical-align: top;
  text-align: left;
  font-weight: 400;
  color: #45587a;
  & > div {
    height: 32px;
    padding-left: ${p => p.$pad ?? 7}px;
    line-height: 32px;
    border-right: ${p => (p.$line ? '1px solid #e3e3e3' : '0')};
  }
`;
const SortMark = styled.span`
  position: absolute;
  top: -2px;
  left: 161px;
`;
const Tr = styled.tr<{ $state?: 'selected' | 'hover' }>`
  & > td {
    background: ${p => (p.$state === 'selected' ? '#cce8ff' : p.$state === 'hover' ? '#e5f3ff' : 'transparent')};
    border: 0 solid ${p => (p.$state === 'selected' ? '#99d1ff' : 'transparent')};
    border-width: 1px 0;
  }
  & > td:first-child { border-left-width: 1px; border-radius: 2px 0 0 2px; }
  & > td:last-child { border-right-width: 1px; border-radius: 0 2px 2px 0; }
`;
const Td = styled.td<{ $latin?: boolean; $end?: boolean }>`
  height: 35px;
  padding: 0 4px 0 7px;
  color: #6b6b6b;
  font-size: ${p => (p.$latin ? 16 : 15)}px;
  line-height: 20px;
  text-align: ${p => (p.$end ? 'right' : 'left')};
`;
const NameTd = styled(Td)`
  padding-left: 5px;
  color: #000;
`;
const Name = styled.div`
  display: flex;
  align-items: center;
  gap: 6px;
`;

const Status = styled.footer`
  display: flex;
  align-items: center;
  height: 29px;
  padding: 0 5px 0 17px;
  color: #24406a;
  line-height: 20px;
`;
const StatusText = styled.span`
  padding-bottom: 2px;
`;
const StatusRule = styled.i`
  width: 1px;
  height: 14px;
  margin: 0 12px;
  background: #ececec;
`;
const ViewButton = styled.button<{ $on?: boolean }>`
  display: grid;
  place-items: center;
  width: 28px;
  height: 29px;
  border: 1px solid ${p => (p.$on ? '#26a0da' : 'transparent')};
  background: ${p => (p.$on ? '#cbe8f6' : 'transparent')};
`;
const ViewButtons = styled.div`
  display: flex;
  margin-left: auto;
`;

type Node = { level: number; icon: string; text: string; open?: boolean; leaf?: boolean; on?: boolean; apart?: boolean };
const TREE: Node[] = [
  { level: 1, icon: 'folder', text: 'config-dev', leaf: true },
  { level: 1, icon: 'folder', text: 'huangShuRong', leaf: true },
  { level: 1, icon: 'folder', text: 'saas_all', leaf: true },
  { level: 1, icon: 'folder', text: '桌面收纳0601', leaf: true, apart: true },
  { level: 0, icon: 'desktop', text: '桌面', open: true },
  { level: 1, icon: 'onedrive', text: 'OneDrive - Personal' },
  { level: 1, icon: 'folder', text: 'xhh' },
  { level: 1, icon: 'pc', text: '此电脑', open: true },
  { level: 2, icon: 'video', text: '视频' },
  { level: 2, icon: 'picture', text: '图片' },
  { level: 2, icon: 'doc', text: '文档' },
  { level: 2, icon: 'download', text: '下载' },
  { level: 2, icon: 'thunder', text: '迅雷下载' },
  { level: 2, icon: 'music', text: '音乐' },
  { level: 2, icon: 'desktop2', text: '桌面' },
  { level: 2, icon: 'driveC', text: 'Windows (C:)' },
  { level: 2, icon: 'drive', text: '新加卷 (D:)', on: true },
  { level: 2, icon: 'drive', text: '新加卷 (E:)' },
  { level: 1, icon: 'library', text: '库' },
];

type FileRow = { name: string; date: string; type: string; size?: string; state?: 'selected' | 'hover' };
const FILES: FileRow[] = [
  { name: 'bin', date: '2022/6/27 16:20', type: '文件夹' },
  { name: 'config', date: '2022/6/27 16:20', type: '文件夹' },
  { name: 'data', date: '2022/6/27 15:55', type: '文件夹' },
  { name: 'libs', date: '2022/6/27 16:20', type: '文件夹' },
  { name: 'logs', date: '2022/8/2 9:38', type: '文件夹', state: 'selected' },
  { name: 'site-docs', date: '2022/6/27 16:20', type: '文件夹' },
  { name: 'tmp', date: '2022/8/1 14:49', type: '文件夹', state: 'hover' },
  { name: 'LICENSE', date: '2018/11/10 3:50', type: '文件', size: '32 KB' },
  { name: 'NOTICE', date: '2018/11/10 3:50', type: '文件', size: '1 KB' },
];

const Explorer = () => (
  <Window aria-label="kafka_2.12-2.1.0">
    <Head>
      <TitleBar>
        <SmallFolder />
        <Title>kafka_2.12-2.1.0</Title>
        <Captions>
          <CaptionButton type="button" aria-label="最小化"><svg width="14" height="14" viewBox="0 0 14 14" stroke="#000"><path d="M1 6.500 H13" /></svg></CaptionButton>
          <CaptionButton type="button" aria-label="最大化"><svg width="14" height="14" viewBox="0 0 14 14" fill="none" stroke="#000"><rect x="1.500" y="1.500" width="11" height="11" rx="1" /></svg></CaptionButton>
          <CaptionButton type="button" aria-label="关闭"><svg width="14" height="14" viewBox="0 0 14 14" stroke="#000"><path d="M1 1 L13 13 M13 1 L1 13" /></svg></CaptionButton>
        </Captions>
      </TitleBar>
      <Commands>
        <TextCommand type="button">
          <LineIcon><circle cx="10" cy="11" r="9" /><path d="M10 7 V15 M6 11 H14" stroke={BLUE} /></LineIcon>
          <span>新建</span><Chevron />
        </TextCommand>
        <Rule />
        <CommandGroup>
          <IconCommand type="button" aria-label="剪切"><LineIcon><path d="M5 1 L13 15 M17 1 L9 15" /><circle cx="6" cy="17" r="3" stroke={BLUE} /><circle cx="16" cy="17" r="3" stroke={BLUE} /></LineIcon></IconCommand>
          <IconCommand type="button" aria-label="复制"><LineIcon><path d="M3 4 V17 Q3 21 7 21 H14" /><rect x="5" y="1" width="13" height="18" rx="2" stroke={BLUE} strokeWidth="1.500" /></LineIcon></IconCommand>
          <IconCommand type="button" aria-label="粘贴"><LineIcon faded><path d="M7 3 H3 V21 H8 M13 3 H17 V6" /><rect x="6" y="1" width="8" height="3" rx="1" /><rect x="10" y="8" width="9" height="13" rx="1" stroke={BLUE} /></LineIcon></IconCommand>
          <IconCommand type="button" aria-label="重命名"><LineIcon><path d="M12 4 H3 Q1 4 1 6 V16 Q1 18 3 18 H12 M17 4 H19 Q21 4 21 6 V16 Q21 18 19 18 H17" /><path d="M14 1 V21 M12 1 H17 M12 21 H17 M5 11 H11" stroke={BLUE} strokeWidth="1.800" /></LineIcon></IconCommand>
          <IconCommand type="button" aria-label="共享"><LineIcon faded><path d="M8 4 H4 Q2 4 2 6 V18 Q2 20 4 20 H16 Q18 20 18 18 V16" /><path d="M14 3 L21 9 L14 14 V11 Q9 11 6 15 Q7 7 14 6Z" stroke={BLUE} /></LineIcon></IconCommand>
          <IconCommand type="button" aria-label="删除"><LineIcon><path d="M2 4 H20 M8 4 Q8 1 11 1 Q14 1 14 4 M4 4 L5 19 Q5 21 7 21 H15 Q17 21 17 19 L18 4 M9 9 V16 M13 9 V16" /></LineIcon></IconCommand>
        </CommandGroup>
        <Rule />
        <CommandGroup>
          <TextCommand type="button">
            <LineIcon><path d="M6 19 V3 M1 8 L6 3 L11 8" /><path d="M15 3 V19 M10 14 L15 19 L20 14" stroke={BLUE} /></LineIcon>
            <span>排序</span><Chevron />
          </TextCommand>
          <TextCommand type="button">
            <LineIcon><path d="M1 5 H20 M1 9 H20 M1 13 H20 M1 17 H20" /></LineIcon>
            <span>查看</span><Chevron />
          </TextCommand>
        </CommandGroup>
        <Rule />
        <IconCommand type="button" aria-label="更多"><svg width="22" height="6" viewBox="0 0 22 6"><circle cx="3" cy="3" r="2" /><circle cx="11" cy="3" r="2" /><circle cx="19" cy="3" r="2" /></svg></IconCommand>
      </Commands>
    </Head>

    <NavBar>
      <NavButton $w={46} type="button" aria-label="后退"><svg width="16" height="16" viewBox="0 0 16 16" fill="none" stroke="#555" strokeWidth="1.300"><path d="M15 8 H2 M8 2 L2 8 L8 14" /></svg></NavButton>
      <NavButton $w={46} type="button" aria-label="前进"><svg width="16" height="16" viewBox="0 0 16 16" fill="none" stroke="#999" strokeWidth="1.300"><path d="M1 8 H14 M8 2 L14 8 L8 14" /></svg></NavButton>
      <NavButton $w={28} type="button" aria-label="最近位置"><Chevron size={12} color="#555" /></NavButton>
      <NavButton $w={44} type="button" aria-label="上移"><svg width="16" height="16" viewBox="0 0 16 16" fill="none" stroke="#555" strokeWidth="1.300"><path d="M8 16 V1 M1 8 L8 1 L15 8" /></svg></NavButton>
      <Address>
        <SmallFolder />
        <Crumbs>
          <Chevron dir="right" color="#333" />
          {['此电脑', '新加卷 (D:)', 'kafka_2.12-2.1.0'].map(t => (
            <React.Fragment key={t}><Crumb type="button">{t}</Crumb><Chevron dir="right" color="#333" /></React.Fragment>
          ))}
        </Crumbs>
        <NavButton $w={43} type="button" aria-label="历史记录"><Chevron size={16} color="#555" /></NavButton>
        <NavButton $w={43} type="button" aria-label="刷新"><svg width="18" height="18" viewBox="0 0 18 18" fill="none" stroke="#666" strokeWidth="1.300"><path d="M16 9 A7 7 0 1 1 13 3 L15 5 M15 1 V5 H11" /></svg></NavButton>
      </Address>
      <SearchBox>
        <svg width="18" height="18" viewBox="0 0 18 18" fill="none" stroke="#777" strokeWidth="1.200" aria-hidden="true"><circle cx="11" cy="7" r="5" /><path d="M7 11 L1 17" /></svg>
        <SearchInput type="text" aria-label="搜索" placeholder="在 kafka_2.12-2.1.0 中搜索" />
      </SearchBox>
    </NavBar>

    <Body>
      <Side>
        <Tree>
          {TREE.map((n, i) => (
            <TreeItem key={i} $apart={n.apart}>
              <TreeRow type="button" $level={n.level} $on={n.on} $cjk={CJK.test(n.text)}>
                <Twist>{!n.leaf && <Chevron dir={n.open ? 'down' : 'right'} size={14} color={n.open ? '#222' : '#888'} />}</Twist>
                <TreeIcon name={n.icon} />
                <TreeLabel>{n.text}</TreeLabel>
              </TreeRow>
            </TreeItem>
          ))}
        </Tree>
        <Track><Thumb /></Track>
      </Side>
      <Files>
        <Table>
          <colgroup><col width="322" /><col width="180" /><col width="150" /><col width="95" /><col width="5" /></colgroup>
          <thead>
            <tr>
              <Th $line $pad={18}><div>名称</div><SortMark><Chevron dir="up" size={12} color="#555" /></SortMark></Th>
              <Th $line><div>修改日期</div></Th>
              <Th $line><div>类型</div></Th>
              <Th><div>大小</div></Th>
              <Th $line $pad={0} as="td"><div /></Th>
            </tr>
          </thead>
          <tbody>
            {FILES.map(r => (
              <Tr key={r.name} $state={r.state}>
                <NameTd $latin>
                  <Name>
                    {r.size
                      ? <svg width="18" height="20" viewBox="0 0 18 20" fill="#fbfbfb" stroke="#777"><path d="M1.500 .5 H11.500 L16.500 5.500 V19.500 H1.500Z M11.500 .5 V5.500 H16.500" /></svg>
                      : <SmallFolder width={18} />}
                    <span>{r.name}</span>
                  </Name>
                </NameTd>
                <Td $latin>{r.date}</Td>
                <Td>{r.type}</Td>
                <Td $latin $end>{r.size}</Td>
              </Tr>
            ))}
          </tbody>
        </Table>
      </Files>
    </Body>

    <Status>
      <StatusText>9 个项目</StatusText><StatusRule /><StatusText>选中 1 个项目</StatusText><StatusRule />
      <ViewButtons>
        <ViewButton $on type="button" aria-label="详细信息"><svg width="14" height="14" viewBox="0 0 14 14" stroke="#000"><path d="M0 1.500 H14 M0 5.500 H14 M0 9.500 H14 M0 13.500 H14" /></svg></ViewButton>
        <ViewButton type="button" aria-label="大图标"><svg width="14" height="15" viewBox="0 0 14 15" fill="none" stroke="#000"><rect x=".5" y=".5" width="13" height="11" /><path d="M0 14 H14" /></svg></ViewButton>
      </ViewButtons>
    </Status>
  </Window>
);

/* ---------- taskbar ---------- */

const Bar = styled.footer`
  position: relative;
  display: grid;
  grid-template-columns: 1fr auto 1fr;
  height: 60px;
  background: #202020;
  color: #fff;
`;
const Weather = styled.button`
  display: flex;
  align-items: center;
  gap: 10px;
  padding-left: 26px;
  justify-self: start;
  color: #fff;
  font-size: 14px;
  line-height: 20px;
  text-align: left;
  & span { display: block; }
  & span span + span { color: #c9c9c9; font-size: 15px; }
`;
const Apps = styled.div`
  display: flex;
`;
const AppButton = styled.button<{ $active?: boolean; $running?: boolean }>`
  position: relative;
  display: grid;
  place-items: center;
  width: 55px;
  &::before {
    content: '';
    position: absolute;
    inset: 5px 6px;
    border-radius: 5px;
    background: ${p => (p.$active ? '#2d2d2d' : 'none')};
    box-shadow: ${p => (p.$active ? '0 0 0 1px #383838, 6px 0 0 0 #2b2b2b' : 'none')};
  }
  &::after {
    content: '';
    position: absolute;
    bottom: 6px;
    width: ${p => (p.$active ? 20 : 8)}px;
    height: 4px;
    border-radius: 2px;
    background: ${p => (p.$active ? '#4cc2ff' : p.$running ? '#9a9a9a' : 'none')};
  }
  & > svg { position: relative; }
`;
const Tray = styled.div`
  display: flex;
  justify-content: flex-end;
  padding-right: 17px;
`;
const TrayButton = styled.button<{ $w?: number }>`
  display: grid;
  place-items: center;
  width: ${p => p.$w ?? 30}px;
  color: #fff;
  font-size: 19px;
`;
const TrayGroup = styled.div`
  display: flex;
  margin-left: 4px;
`;
const Clock = styled.button`
  display: flex;
  flex-direction: column;
  align-items: flex-end;
  justify-content: center;
  width: 83px;
  padding-right: 6px;
  color: #fff;
  font-size: 14px;
  line-height: 20px;
`;
const Watermark = styled.div`
  position: absolute;
  right: 16px;
  bottom: 7px;
  z-index: 4;
  color: rgba(190, 190, 190, 0.75);
  font-size: 17px;
  line-height: 24px;
  white-space: nowrap;
  pointer-events: none;
`;

const APPS: [string, string, ('active' | 'running')?][] = [
  ['start', '开始'], ['search', '搜索'], ['taskview', '任务视图'], ['youdao', '有道'], ['explorer', '文件资源管理器', 'active'],
  ['edge', 'Edge'], ['chrome', 'Chrome', 'running'], ['store', '商店'], ['wordapp', 'Word'], ['bird', '迅雷'],
  ['idea', 'IDEA', 'running'], ['navicat', 'Navicat', 'running'], ['cmd', 'cmd', 'running'], ['vscode', 'VS Code', 'running'],
  ['photos', '照片', 'running'], ['baidu', '百度网盘', 'running'], ['apipost', 'ApiPost', 'running'],
];

const Taskbar = () => (
  <Bar>
    <Weather type="button">
      <svg width="30" height="26" viewBox="0 0 30 26" aria-hidden="true"><circle cx="22" cy="9" r="7" fill="#fba312" /><path d="M6 25 Q0 24 1 18 Q2 14 6 14 Q8 7 14 7 Q20 8 21 13 Q28 13 28 19 Q28 25 23 25Z" fill="url(#cloud)" /></svg>
      <span><span>30°C</span><span>多云</span></span>
    </Weather>
    <Apps>
      {APPS.map(([art, label, state]) => (
        <AppButton key={art} type="button" aria-label={label} $active={state === 'active'} $running={state === 'running'}><Art name={art} size={30} /></AppButton>
      ))}
    </Apps>
    <Tray>
      <TrayButton type="button" aria-label="显示隐藏的图标"><Chevron dir="up" size={18} color="#fff" /></TrayButton>
      <TrayButton type="button" aria-label="微信"><Art name="wechat" size={20} /></TrayButton>
      <TrayButton type="button" aria-label="音频"><svg width="20" height="20" viewBox="0 0 20 20" fill="none" stroke="#ddd" strokeWidth="1.300"><path d="M0 2 H12 M0 6 H9 M0 10 H7 M10 10 H13 L18 5 V19 L13 15 H10Z" /></svg></TrayButton>
      <TrayButton type="button" aria-label="安全"><svg width="20" height="22" viewBox="0 0 20 22"><path d="M9 0 Q13 3 18 3 V10 Q17 17 9 21 Q1 17 0 10 V3 Q5 3 9 0Z" fill="#1b8fe0" /><path d="M9 0 Q13 3 18 3 V10 H9Z" fill="#45b6f2" /><path d="M14 9 L20 21 H8Z" fill="#ffc41a" /><path d="M14 13 V17 M14 18 V20" stroke="#222" /></svg></TrayButton>
      <TrayButton type="button" $w={38}>英</TrayButton>
      <TrayButton type="button" $w={58}>拼</TrayButton>
      <TrayGroup>
        <TrayButton type="button" aria-label="网络"><svg width="22" height="18" viewBox="0 0 22 18" fill="none" stroke="#fff" strokeWidth="1.500"><path d="M1 7 Q11 -3 21 7 M4 10 Q11 3 18 10 M7 13 Q11 9 15 13" /><circle cx="11" cy="15" r="1.500" fill="#fff" /></svg></TrayButton>
        <TrayButton type="button" aria-label="音量"><svg width="20" height="18" viewBox="0 0 20 18" fill="none" stroke="#fff" strokeWidth="1.300"><path d="M1 6 H4 L9 2 V16 L4 12 H1Z M11 6 Q13 9 11 12 M14 4 Q17 9 14 14" /><path d="M16 2 Q21 9 16 16" stroke="#777" /></svg></TrayButton>
        <TrayButton type="button" aria-label="电池"><svg width="22" height="18" viewBox="0 0 22 18" fill="none" stroke="#fff" strokeWidth="1.500"><path d="M8 4 H17 Q19 4 19 6 V13 Q19 15 17 15 H7 Q5 15 5 13 V10 M21 8 V11" /><path d="M1 3 H7 V6 Q7 8 4 8 Q1 8 1 6Z M2 0 V3 M6 0 V3" fill="#fff" /></svg></TrayButton>
      </TrayGroup>
      <Clock type="button"><span>9:47</span><span>2022/8/2</span></Clock>
      <TrayButton type="button" aria-label="专注助手"><svg width="18" height="20" viewBox="0 0 18 20" fill="none" stroke="#fff" strokeWidth="1.400"><path d="M9 1 Q16 4 15 11 Q13 18 6 17 Q3 16 2 14 Q10 14 10 7 Q10 3 9 1Z" /></svg></TrayButton>
    </Tray>
    <Watermark>CSDN @登高去梯</Watermark>
  </Bar>
);

export default function App() {
  return (
    <Screen>
      <GlobalStyle />
      <Defs />
      <Desktop>
        <DesktopIcons items={LEFT} columns={6} />
        <DesktopIcons items={RIGHT} columns={4} />
        <WallpaperFleck />
        <Explorer />
        <SpeedBadge>
          <BadgeLogo><svg width="28" height="24" viewBox="4 8 52 44" aria-hidden="true"><Clover mono /></svg></BadgeLogo>
          <BadgeArrow><svg width="10" height="14" viewBox="0 0 10 14" stroke="#0f8ff0" strokeWidth="2" fill="none" aria-hidden="true"><path d="M5 0 V11 M1 8 L5 12 L9 8" /></svg></BadgeArrow>
          <span>135 KB/s</span>
        </SpeedBadge>
      </Desktop>
      <Taskbar />
    </Screen>
  );
}
